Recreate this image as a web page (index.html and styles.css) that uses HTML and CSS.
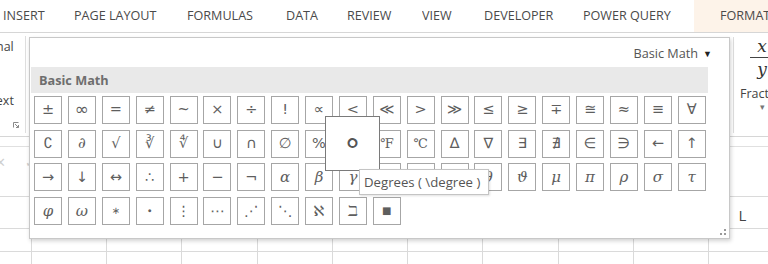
FILE: index.html
```html
<!DOCTYPE html>
<html>
<head>
<meta charset="utf-8">
<link rel="stylesheet" href="styles.css">
</head>
<body>
<div class="app">
  <div class="tabs">
    <div class="tab w-insert">INSERT</div>
    <div class="tab w-page">PAGE LAYOUT</div>
    <div class="tab w-form">FORMULAS</div>
    <div class="tab w-data">DATA</div>
    <div class="tab w-review">REVIEW</div>
    <div class="tab w-view">VIEW</div>
    <div class="tab w-dev">DEVELOPER</div>
    <div class="tab w-pq">POWER QUERY</div>
    <div class="tab tab-format">FORMAT</div>
  </div>

  <div class="ribbon">
    <div class="grp-tools">
      <div class="tool-labels">
        <div class="tool-label">Professional</div>
        <div class="tool-label"></div>
        <div class="tool-label">Normal Text</div>
      </div>
      <svg class="launcher" width="6" height="6" viewBox="0 0 6 6">
        <path d="M0.5 5.5V0.5H5.5" fill="none" stroke="#8a8a8a" stroke-width="1"/>
        <path d="M2 2L5.5 5.5M5.5 3V5.5H3" fill="none" stroke="#8a8a8a" stroke-width="1"/>
      </svg>
    </div>
    <div class="ribbon-mid"></div>
    <div class="grp-struct">
      <div class="frac">
        <span class="frac-num">x</span>
        <span class="frac-bar"></span>
        <span class="frac-den">y</span>
      </div>
      <div class="struct-label">Fraction</div>
      <div class="struct-arrow">▾</div>
    </div>
  </div>

  <div class="formula-bar">
    <span class="fb-x">✕</span>
    <span class="fb-check">✓</span>
  </div>

  <div class="sheet">
    <div class="cell hdr corner"></div>
    <div class="cell hdr"></div><div class="cell hdr"></div><div class="cell hdr"></div><div class="cell hdr"></div><div class="cell hdr"></div>
    <div class="cell hdr"></div><div class="cell hdr"></div><div class="cell hdr"></div><div class="cell hdr"></div><div class="cell hdr">L</div>
    <div class="cell rowhdr"></div>
    <div class="cell"></div><div class="cell"></div><div class="cell"></div><div class="cell"></div><div class="cell"></div>
    <div class="cell"></div><div class="cell"></div><div class="cell"></div><div class="cell"></div><div class="cell"></div>
    <div class="cell rowhdr"></div>
    <div class="cell"></div><div class="cell"></div><div class="cell"></div><div class="cell"></div><div class="cell"></div>
    <div class="cell"></div><div class="cell"></div><div class="cell"></div><div class="cell"></div><div class="cell"></div>
  </div>

  <div class="popup">
    <div class="pop-head"><span>Basic Math</span><span class="caret">▼</span></div>
    <div class="band">Basic Math</div>
    <div class="symgrid">
      <div class="sym">±</div><div class="sym wide">∞</div><div class="sym">=</div><div class="sym">≠</div><div class="sym">~</div>
      <div class="sym">×</div><div class="sym">÷</div><div class="sym">!</div><div class="sym">∝</div><div class="sym">&lt;</div>
      <div class="sym">≪</div><div class="sym">&gt;</div><div class="sym">≫</div><div class="sym">≤</div><div class="sym">≥</div>
      <div class="sym">∓</div><div class="sym">≅</div><div class="sym">≈</div><div class="sym">≡</div><div class="sym">∀</div>

      <div class="sym">∁</div><div class="sym it">∂</div><div class="sym">√</div><div class="sym">∛</div><div class="sym">∜</div>
      <div class="sym">∪</div><div class="sym">∩</div><div class="sym">∅</div><div class="sym">%</div><div class="sym">°</div>
      <div class="sym serif">℉</div><div class="sym serif">℃</div><div class="sym">∆</div><div class="sym">∇</div><div class="sym">∃</div>
      <div class="sym">∄</div><div class="sym">∈</div><div class="sym">∋</div><div class="sym">←</div><div class="sym">↑</div>

      <div class="sym">→</div><div class="sym">↓</div><div class="sym">↔</div><div class="sym">∴</div><div class="sym">+</div>
      <div class="sym">−</div><div class="sym">¬</div><div class="sym it">α</div><div class="sym it">β</div><div class="sym it">γ</div>
      <div class="sym it">δ</div><div class="sym it">ε</div><div class="sym it">ϵ</div><div class="sym it">θ</div><div class="sym it">ϑ</div>
      <div class="sym it">μ</div><div class="sym it">π</div><div class="sym it">ρ</div><div class="sym it">σ</div><div class="sym it">τ</div>

      <div class="sym it">φ</div><div class="sym it">ω</div><div class="sym small">∗</div><div class="sym small">∙</div><div class="sym">⋮</div>
      <div class="sym">⋯</div><div class="sym">⋰</div><div class="sym">⋱</div><div class="sym">ℵ</div><div class="sym">ℶ</div>
      <div class="sym small">■</div>
    </div>
    <svg class="grip" width="8" height="8" viewBox="0 0 8 8">
      <rect x="5" y="1" width="2" height="2" fill="#9a9a9a"/>
      <rect x="1" y="5" width="2" height="2" fill="#9a9a9a"/>
      <rect x="5" y="5" width="2" height="2" fill="#9a9a9a"/>
    </svg>
  </div>

  <div class="hover-cell"><span class="hover-glyph">°</span></div>
  <div class="tooltip">Degrees ( \degree )</div>
</div>
</body>
</html>
```

FILE: styles.css
```css
* { box-sizing: border-box; }
html, body { margin: 0; padding: 0; background: #fff; }
body {
  width: 768px;
  height: 264px;
  overflow: hidden;
  font-family: "Open Sans", "Noto Sans", "Liberation Sans", sans-serif;
  color: #444;
}
.app { position: relative; width: 768px; height: 264px; overflow: hidden; }

/* tabs */
.tabs {
  display: flex;
  height: 33px;
  border-bottom: 1px solid #d6d6d6;
  white-space: nowrap;
}
.tab {
  flex: none;
  font-size: 12.6px;
  line-height: 32px;
  color: #4a4a4a;
  overflow: hidden;
}
.w-insert { width: 74px; padding-left: 3px; }
.w-page { width: 113px; }
.w-form { width: 99px; }
.w-data { width: 61px; }
.w-review { width: 75px; }
.w-view { width: 62px; }
.w-dev { width: 99px; }
.w-pq { width: 111px; }
.tab-format {
  flex: 1;
  background: #fdf3e9;
  padding-left: 26px;
}

/* ribbon */
.ribbon {
  display: flex;
  height: 104px;
  border-bottom: 1px solid #d6d6d6;
}
.grp-tools {
  flex: none;
  width: 26px;
  margin: 3px 0 3px 0;
  border-right: 1px solid #dedede;
  overflow: hidden;
  position: relative;
}
.tool-labels {
  display: flex;
  flex-direction: column;
  margin-left: -58px;
  padding-top: 1px;
}
.tool-label {
  height: 27px;
  line-height: 20px;
  font-size: 12.5px;
  white-space: nowrap;
  color: #444;
}
.launcher {
  position: absolute;
  left: 13px;
  bottom: 5px;
}
.ribbon-mid { flex: 1; }
.grp-struct {
  flex: none;
  width: 35px;
  margin: 4px 0 3px 0;
  border-left: 1px solid #dedede;
  display: flex;
  flex-direction: column;
  align-items: flex-start;
  padding-left: 6px;
  white-space: nowrap;
  overflow: hidden;
}
.frac {
  display: flex;
  flex-direction: column;
  align-items: center;
  width: 28px;
  margin-left: 8px;
  font-family: "DejaVu Serif", "Liberation Serif", serif;
  font-style: italic;
  font-size: 17px;
  line-height: 16px;
  color: #333;
}
.frac-num { padding-top: 1px; }
.frac-bar { display: block; width: 24px; height: 1px; background: #444; margin: 3px 0 3px 0; }
.struct-label {
  margin-top: 9px;
  font-size: 12.5px;
  line-height: 16px;
  color: #444;
}
.struct-arrow {
  margin-left: 20px;
  margin-top: 0px;
  font-size: 9px;
  line-height: 10px;
  color: #777;
}

/* formula bar */
.formula-bar {
  margin-top: 9px;
  height: 50px;
  border-top: 1px solid #e0e0e0;
  display: flex;
  align-items: flex-start;
  padding-top: 7px;
  color: #cfcfcf;
  font-size: 13px;
  line-height: 16px;
}
.fb-x { margin-left: -5px; }
.fb-check { margin-left: 19px; }

/* sheet */
.sheet {
  display: grid;
  grid-template-columns: 31.7px repeat(10, 75.3px);
  grid-template-rows: 32px 23px 23px;
  border-top: 1px solid #dadada;
}
.cell {
  border-right: 1px solid #dadada;
  border-bottom: 1px solid #dadada;
}
.hdr {
  display: flex;
  align-items: center;
  justify-content: center;
  font-family: "Open Sans", "Noto Sans", sans-serif;
  font-size: 15px;
  color: #444;
  padding-right: 8px;
  padding-top: 4px;
}

/* popup */
.popup {
  position: absolute;
  left: 29px;
  top: 37px;
  width: 701px;
  height: 202px;
  background: #fff;
  border: 1px solid #c8c8c8;
  box-shadow: 1px 2px 4px rgba(0, 0, 0, 0.18);
}
.pop-head {
  height: 29px;
  display: flex;
  justify-content: flex-end;
  align-items: center;
  padding-right: 17px;
  font-size: 12.7px;
  color: #555;
  padding-top: 1px;
}
.caret { font-size: 9px; margin-left: 5px; color: #222; }
.band {
  height: 26px;
  margin: 0 21px 0 1px;
  background: #e9e9e9;
  padding-left: 8px;
  font-size: 12.7px;
  font-weight: 700;
  line-height: 26px;
  color: #6e6e6e;
}
.symgrid {
  margin-top: 2.7px;
  padding-left: 4px;
  display: grid;
  grid-template-columns: repeat(20, 28px);
  grid-auto-rows: 28px;
  column-gap: 5.88px;
  row-gap: 5.87px;
}
.sym {
  border: 1px solid #a6a6a6;
  display: flex;
  align-items: center;
  justify-content: center;
  font-family: "DejaVu Sans", "Liberation Sans", sans-serif;
  font-size: 14.5px;
  color: #5e5e5e;
  line-height: 1;
}
.sym.wide { font-size: 17px; }
.sym.it {
  font-family: "DejaVu Serif", "Liberation Serif", serif;
  font-style: italic;
  font-size: 15px;
}
.sym.serif { font-family: "DejaVu Serif", "Liberation Serif", serif; font-size: 13px; }
.sym.small { font-size: 10px; }
.grip { position: absolute; right: 2px; bottom: 2px; }

.hover-cell {
  position: absolute;
  left: 325px;
  top: 116px;
  width: 55px;
  height: 55px;
  background: #fff;
  border: 1px solid #7a7a7a;
  text-align: center;
  padding-top: 18px;
}
.hover-glyph {
  display: block;
  font-family: "DejaVu Sans", sans-serif;
  font-size: 32px;
  line-height: 1;
  color: #555;
}
.tooltip {
  position: absolute;
  left: 359px;
  top: 169px;
  width: 130px;
  height: 26px;
  background: #fff;
  border: 1px solid #c4c4c4;
  box-shadow: 1px 1px 2px rgba(0, 0, 0, 0.12);
  padding-left: 4px;
  font-size: 13.2px;
  line-height: 24px;
  color: #555;
  white-space: nowrap;
}
```
